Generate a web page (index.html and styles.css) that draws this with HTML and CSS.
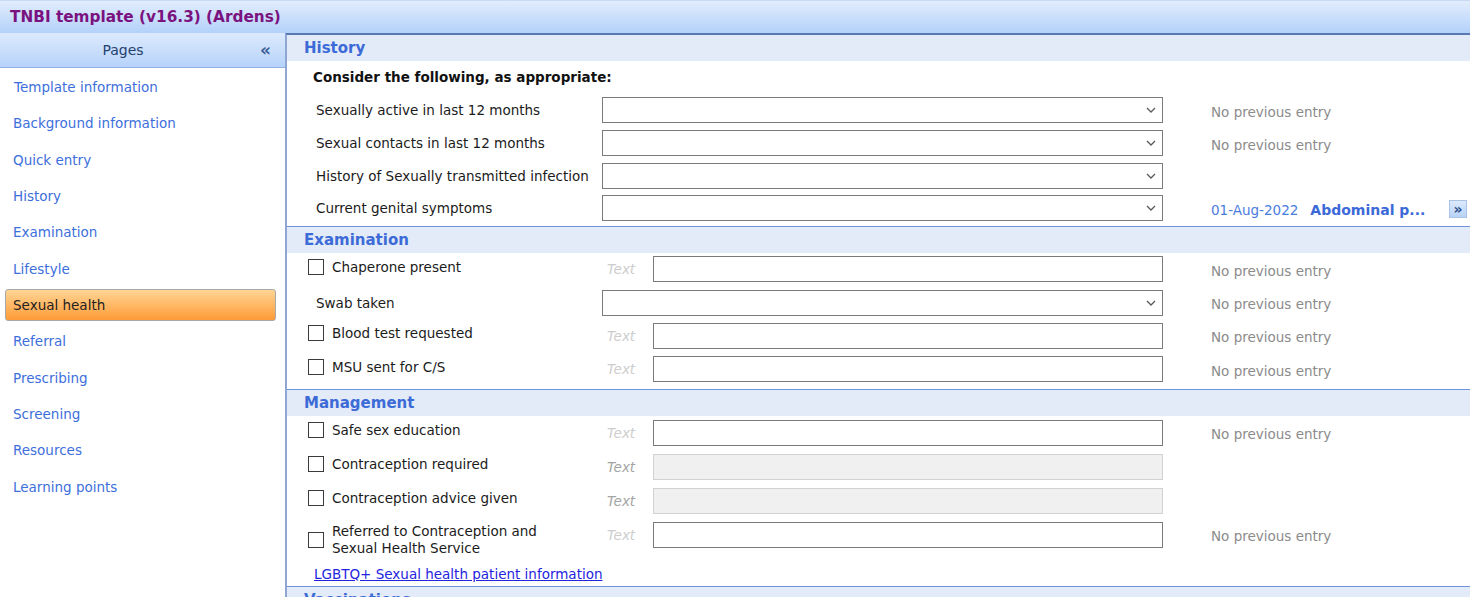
FILE: index.html
```html
<!DOCTYPE html>
<html lang="en">

<head>
    <meta charset="UTF-8">
    <meta name="viewport" content="width=device-width, initial-scale=1.0">
    <title>TNBI template</title>
    <link rel="stylesheet" href="styles.css">
</head>

<body>
    <!-- window title -->
    <div class="titlebar">TNBI template (v16.3) (Ardens)</div>

    <div class="layout">
        <!-- left page list -->
        <div class="sidebar">
            <div class="pages-head">
                <span class="pages-title">Pages</span>
                <span class="collapse">&laquo;</span>
            </div>
            <ul class="nav">
                <li class="first">Template information</li>
                <li>Background information</li>
                <li>Quick entry</li>
                <li>History</li>
                <li>Examination</li>
                <li>Lifestyle</li>
                <li class="active">Sexual health</li>
                <li>Referral</li>
                <li>Prescribing</li>
                <li>Screening</li>
                <li>Resources</li>
                <li>Learning points</li>
            </ul>
        </div>

        <!-- template body -->
        <div class="main">
            <div class="section history">
                <div class="sec-head">History</div>
                <div class="intro">Consider the following, as appropriate:</div>
                <div class="rows">
                    <div class="row">
                        <div class="lbl">Sexually active in last 12 months</div>
                        <div class="field select"><svg width="10" height="6" viewBox="0 0 10 6"><polyline points="1,1 5,5 9,1" /></svg></div>
                        <div class="prev">No previous entry</div>
                    </div>
                    <div class="row">
                        <div class="lbl">Sexual contacts in last 12 months</div>
                        <div class="field select"><svg width="10" height="6" viewBox="0 0 10 6"><polyline points="1,1 5,5 9,1" /></svg></div>
                        <div class="prev">No previous entry</div>
                    </div>
                    <div class="row">
                        <div class="lbl">History of Sexually transmitted infection</div>
                        <div class="field select"><svg width="10" height="6" viewBox="0 0 10 6"><polyline points="1,1 5,5 9,1" /></svg></div>
                    </div>
                    <div class="row">
                        <div class="lbl">Current genital symptoms</div>
                        <div class="field select"><svg width="10" height="6" viewBox="0 0 10 6"><polyline points="1,1 5,5 9,1" /></svg></div>
                        <div class="prev grow"><span class="date">01-Aug-2022</span><b class="last">Abdominal p...</b></div>
                        <span class="more">&raquo;</span>
                    </div>
                </div>
            </div>

            <div class="section exam">
                <div class="sec-head">Examination</div>
                <div class="rows">
                    <div class="row">
                        <label class="lbl chk"><span class="box"></span><span>Chaperone present</span></label>
                        <span class="hint">Text</span>
                        <div class="field text"></div>
                        <div class="prev">No previous entry</div>
                    </div>
                    <div class="row">
                        <div class="lbl">Swab taken</div>
                        <div class="field select"><svg width="10" height="6" viewBox="0 0 10 6"><polyline points="1,1 5,5 9,1" /></svg></div>
                        <div class="prev">No previous entry</div>
                    </div>
                    <div class="row">
                        <label class="lbl chk"><span class="box"></span><span>Blood test requested</span></label>
                        <span class="hint">Text</span>
                        <div class="field text"></div>
                        <div class="prev">No previous entry</div>
                    </div>
                    <div class="row">
                        <label class="lbl chk"><span class="box"></span><span>MSU sent for C/S</span></label>
                        <span class="hint">Text</span>
                        <div class="field text"></div>
                        <div class="prev">No previous entry</div>
                    </div>
                </div>
            </div>

            <div class="section mgmt">
                <div class="sec-head">Management</div>
                <div class="rows">
                    <div class="row">
                        <label class="lbl chk"><span class="box"></span><span>Safe sex education</span></label>
                        <span class="hint">Text</span>
                        <div class="field text"></div>
                        <div class="prev">No previous entry</div>
                    </div>
                    <div class="row">
                        <label class="lbl chk"><span class="box"></span><span>Contraception required</span></label>
                        <span class="hint dark">Text</span>
                        <div class="field text off"></div>
                    </div>
                    <div class="row">
                        <label class="lbl chk"><span class="box"></span><span>Contraception advice given</span></label>
                        <span class="hint dark">Text</span>
                        <div class="field text off"></div>
                    </div>
                    <div class="row">
                        <label class="lbl chk tall"><span class="box"></span><span class="two">Referred to Contraception and<br>Sexual Health Service</span></label>
                        <span class="hint">Text</span>
                        <div class="field text"></div>
                        <div class="prev">No previous entry</div>
                    </div>
                </div>
                <div class="link-row"><a href="#" class="link">LGBTQ+ Sexual health patient information</a></div>
            </div>

            <div class="section">
                <div class="sec-head">Vaccinations</div>
            </div>
        </div>
    </div>
</body>

</html>
```

FILE: styles.css
```css
* {
    box-sizing: border-box;
}

body {
    margin: 0;
    width: 1470px;
    height: 597px;
    overflow: hidden;
    background: #fff;
    color: #1b1b1b;
    font-family: "DejaVu Sans", Verdana, sans-serif;
    font-size: 13.5px;
}

/* title bar */
.titlebar {
    height: 33px;
    padding-left: 10px;
    display: flex;
    align-items: center;
    background: linear-gradient(#e2edfd, #b3d1fa);
    border-top: 1px solid #c8daf4;
    color: #7a127f;
    font-weight: bold;
    font-size: 15.3px;
}

.layout {
    display: flex;
    height: 564px;
}

/* page list */
.sidebar {
    width: 285px;
    flex: none;
}

.pages-head {
    height: 35px;
    display: flex;
    align-items: center;
    background: linear-gradient(#dceafd, #b7d3fa);
    border-bottom: 1px solid #8fb2e6;
}

.pages-title {
    flex: 1;
    text-align: center;
    color: #24416f;
    font-size: 14px;
}

.collapse {
    width: 39px;
    text-align: center;
    color: #3a5a92;
    font-weight: bold;
    font-size: 17px;
}

.nav {
    list-style: none;
    margin: 0;
    padding: 3px 9px 0 5px;
}

.nav li {
    height: 32px;
    margin-bottom: 4.33px;
    padding-left: 7px;
    display: flex;
    align-items: center;
    border: 1px solid transparent;
    border-radius: 3px;
    color: #3d6fdc;
}

.nav li.first {
    padding-left: 8px;
}

.nav li.active {
    background: linear-gradient(#ffd594, #ff9b38);
    border-color: #a9a9a9;
    color: #222;
}

/* template body */
.main {
    flex: 1;
    border-left: 2px solid #8ea6d1;
    border-top: 2px solid #5a79b3;
    overflow: hidden;
}

.section + .section {
    border-top: 1px solid #6f95dc;
}

.sec-head {
    height: 26px;
    padding-left: 17px;
    display: flex;
    align-items: center;
    background: #e3eaf8;
    color: #3c6bd7;
    font-weight: bold;
    font-size: 15px;
}

.intro {
    margin-top: 4px;
    height: 24px;
    line-height: 24px;
    padding-left: 26px;
    font-weight: bold;
    color: #111;
}

.history .rows {
    padding: 5px 0 1px;
}

.exam .rows {
    padding-bottom: 3px;
}

.row {
    display: flex;
    align-items: center;
    height: 32.7px;
}

.exam .row {
    height: 33.3px;
}

.mgmt .row {
    height: 34px;
}

.lbl {
    width: 315px;
    flex: none;
    padding-left: 29px;
    white-space: nowrap;
}

.lbl.chk {
    padding-left: 21px;
    margin-bottom: 5px;
    display: flex;
    align-items: center;
    gap: 8px;
}

.lbl.chk.tall {
    margin-bottom: 0;
    margin-top: 11px;
}

.box {
    width: 16px;
    height: 16px;
    flex: none;
    border: 1px solid #3a3a3a;
    background: #fff;
}

.two {
    line-height: 17px;
}

.hint {
    width: 51px;
    flex: none;
    padding-left: 5px;
    font-style: italic;
    color: #cdcdcd;
}

.hint.dark {
    color: #a4a4a4;
}

.field {
    height: 26px;
    flex: none;
    border: 1px solid #7b7b7b;
    background: #fff;
}

.field.select {
    width: 561px;
    display: flex;
    align-items: center;
    justify-content: flex-end;
    padding-right: 6px;
}

.field.select svg polyline {
    fill: none;
    stroke: #5a5a5a;
    stroke-width: 1.3;
}

.field.text {
    width: 510px;
}

.field.off {
    background: #f0f0f0;
    border-color: #d2d2d2;
}

.prev {
    margin-left: 48px;
    padding-top: 3px;
    color: #8b8b8b;
    white-space: nowrap;
}

.prev.grow {
    flex: 1;
}

.prev .date {
    color: #4a7ce0;
}

.prev .last {
    margin-left: 12px;
    color: #3b69d8;
    font-size: 14px;
}

.more {
    width: 18px;
    height: 18px;
    margin-right: 3px;
    margin-top: 1px;
    display: flex;
    align-items: center;
    justify-content: center;
    background: linear-gradient(#dce9fc, #b8d3f7);
    border: 1px solid #a9c3e8;
    color: #2e4f8a;
    font-weight: bold;
    font-size: 14px;
}

.link-row {
    padding: 14px 0 4px 27px;
    line-height: 16px;
}

.link {
    color: #2424e0;
    text-decoration: underline;
}
```
